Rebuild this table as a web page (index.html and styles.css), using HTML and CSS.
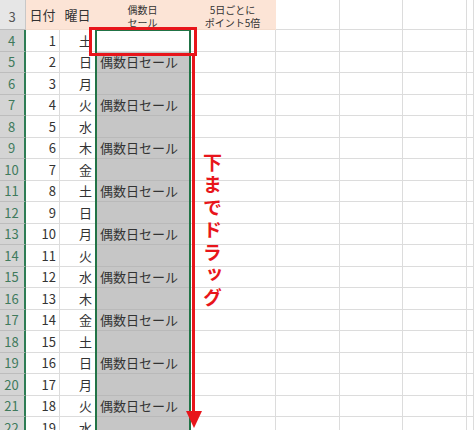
FILE: index.html
```html
<!DOCTYPE html>
<html lang="ja">
<head>
<meta charset="utf-8">
<link rel="stylesheet" href="styles.css">
</head>
<body>
<div class="wrap">
  <div class="sheet">
    <div class="rh rh-top">3</div>
    <div class="c hd">日付</div>
    <div class="c hd">曜日</div>
    <div class="c hd small">偶数日<br>セール</div>
    <div class="c hd small">5日ごとに<br>ポイント5倍</div>
    <div class="c hw"></div><div class="c hw"></div><div class="c hw"></div><div class="c hw"></div>
  </div>
  <div class="sheet" id="rows"></div>

  <div class="sel"></div>
  <div class="redbox"></div>
  <div class="arrow-line"></div>
  <svg class="arrow-head" width="16" height="17" viewBox="0 0 16 17"><polygon points="0,0 16,0 8,17" fill="#e8151b"/></svg>
  <div class="note">下までドラッグ</div>
</div>
<script>
const wd = ['土','日','月','火','水','木','金'];
const rows = document.getElementById('rows');
let html = '';
for (let i = 0; i < 19; i++) {
  const day = i + 1;
  const cls = i === 0 ? 'c d active' : 'c d selbg';
  html += '<div class="rh">' + (i + 4) + '</div>' +
    '<div class="c r">' + day + '</div>' +
    '<div class="c r">' + wd[i % 7] + '</div>' +
    '<div class="' + cls + '">' + (day % 2 === 0 ? '偶数日セール' : '') + '</div>' +
    '<div class="c"></div><div class="c"></div><div class="c"></div><div class="c"></div><div class="c"></div>';
}
rows.innerHTML = html;
</script>
</body>
</html>
```

FILE: styles.css
```css
* { box-sizing: border-box; }
html, body { margin: 0; padding: 0; background: #fff; overflow: hidden; }
body {
  width: 474px; height: 430px;
  font-family: "Noto Sans CJK JP", "Noto Sans", sans-serif;
  font-size: 13px; color: #333;
}
.wrap { position: relative; width: 474px; height: 430px; overflow: hidden; }
.sheet {
  display: grid;
  grid-template-columns: 26px 34px 36px 94px 86px 64px 63px 64px 7px;
}
.sheet:first-child { grid-template-rows: 30px; }
#rows { grid-auto-rows: 21.5px; }

.c {
  border-right: 1px solid #dcdcdc;
  border-bottom: 1px solid #dcdcdc;
  display: flex; align-items: center;
  padding: 0 3px;
  white-space: nowrap;
  overflow: hidden;
}
.r { justify-content: flex-end; }
.d { justify-content: flex-start; padding-left: 4px; }
.selbg { background: #c6c6c6; border-bottom-color: #b9b9b9; border-right-color: #c6c6c6; }
.active { background: #fff; }

.hd {
  background: #fce4d6;
  border-right-color: #fce4d6;
  border-bottom-color: #f4dccd;
  justify-content: center;
  padding-bottom: 1px;
}
.small {
  font-size: 10px; line-height: 13px; text-align: center;
  align-items: flex-start;
  padding-top: 3px;
  color: #333;
}

.rh {
  background: #d4d4d4;
  color: #3f7a5c;
  border-right: 2px solid #2e7d55;
  border-bottom: 1px solid #bdbdbd;
  display: flex; align-items: center; justify-content: center;
  font-size: 13px;
  padding-right: 1px;
}
.rh-top {
  background: #e6e6e6;
  color: #555;
  border-right: 1px solid #c8c8c8;
  border-bottom: 1px solid #bdbdbd;
  align-items: flex-end;
  padding-bottom: 3px;
}

.sel {
  position: absolute;
  left: 95px; top: 29px; width: 96px; height: 420px;
  border: 2px solid #217346;
}
.redbox {
  position: absolute;
  left: 89px; top: 27px; width: 108px; height: 29px;
  border: 3px solid #e8151b;
}
.arrow-line {
  position: absolute;
  left: 192px; top: 56px; width: 3px; height: 357px;
  background: #e8151b;
}
.arrow-head {
  position: absolute;
  left: 186px; top: 411px;
  display: block;
}
.note {
  position: absolute;
  left: 203px; top: 153px;
  writing-mode: vertical-rl;
  font-size: 19px; font-weight: 700;
  letter-spacing: 3.5px;
  line-height: 1;
  color: #e8151b;
}
```
